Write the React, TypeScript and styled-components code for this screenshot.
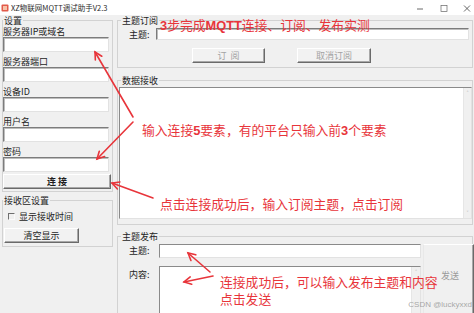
import React from "react";
import styled, { createGlobalStyle } from "styled-components";

const UI = `"Noto Sans CJK SC", "Noto Sans", sans-serif`;
const RED = "#e8353b";

const Global = createGlobalStyle`
  html, body { margin: 0; padding: 0; background: #f0f0f0; }
  body { font-family: ${UI}; }
  * { box-sizing: border-box; }
`;

const Window = styled.div`
  position: relative;
  width: 474px;
  height: 313px;
  overflow: hidden;
  background: #f0f0f0;
  font-family: ${UI};
  font-size: 9px;
  color: #1e1e1e;
  display: flex;
  flex-direction: column;
`;

const TitleBar = styled.div`
  height: 15px;
  flex: none;
  background: #fff;
  display: flex;
  align-items: center;
  padding-left: 1px;
`;

const TitleText = styled.span`
  flex: 1;
  margin-left: 2px;
  font-size: 7.5px;
  line-height: 15px;
  color: #2a2a2a;
  white-space: nowrap;
`;

const Controls = styled.div`
  display: flex;
  gap: 13.5px;
  margin-right: 2px;
  color: #444;
`;

const Body = styled.div`
  flex: 1;
  min-height: 0;
  display: flex;
`;

const LeftCol = styled.div`
  width: 111px;
  margin-left: 2px;
  flex: none;
  display: flex;
  flex-direction: column;
`;

const RightCol = styled.div`
  flex: 1;
  min-width: 0;
  display: flex;
  flex-direction: column;
  padding: 0 1px 0 4px;
`;

const Group = styled.fieldset<{ $mt?: number }>`
  margin: ${(p) => p.$mt ?? 0}px 0 0 0;
  padding: 0;
  min-width: 0;
  border: 1px solid #d2d2d2;
  flex: none;
`;

const Legend = styled.legend<{ $ml?: number }>`
  padding: 0 1px;
  margin-left: ${(p) => p.$ml ?? 0}px;
  font-size: 9px;
  line-height: 11px;
  white-space: nowrap;
`;

const Content = styled.div<{ $p: string }>`
  padding: ${(p) => p.$p};
  display: flex;
  flex-direction: column;
`;

const FieldLabel = styled.div`
  height: 11px;
  line-height: 11px;
  white-space: nowrap;
`;

const Field = styled.div`
  display: flex;
  flex-direction: column;
  & + & {
    margin-top: 4px;
  }
`;

const TextInput = styled.input<{ $w: number; $h: number }>`
  width: ${(p) => p.$w}px;
  height: ${(p) => p.$h}px;
  margin: 0;
  padding: 0 2px;
  background: #fff;
  border: 1px solid;
  border-color: #7c7c7c #e2e2e2 #e2e2e2 #7c7c7c;
  box-shadow: inset 1px 1px 0 #bdbdbd;
  outline: none;
  font: inherit;
`;

const Button = styled.button<{ $w: number; $h: number; $bold?: boolean; $disabled?: boolean; $mt?: number; $ml?: number }>`
  width: ${(p) => p.$w}px;
  height: ${(p) => p.$h}px;
  margin: ${(p) => p.$mt ?? 0}px 0 0 ${(p) => p.$ml ?? 0}px;
  padding: 0;
  background: #f2f2f2;
  border: 1px solid;
  border-color: #ffffff #6a6a6a #6a6a6a #ffffff;
  box-shadow: inset -1px -1px 0 #a8a8a8;
  font-family: ${UI};
  font-size: 9px;
  line-height: 11px;
  font-weight: ${(p) => (p.$bold ? 700 : 400)};
  color: ${(p) => (p.$disabled ? "#a3a3a3" : "#1e1e1e")};
  white-space: pre;
  flex: none;
`;

const CheckRow = styled.div`
  margin-top: 5px;
  height: 11px;
  display: flex;
  align-items: center;
  padding-left: 5px;
  gap: 4px;
  white-space: nowrap;
`;

const CheckBox = styled.span`
  width: 7px;
  height: 7px;
  border-top: 1px solid #6e6e6e;
  border-left: 1px solid #6e6e6e;
  border-right: 1px solid #fafafa;
  border-bottom: 1px solid #fafafa;
`;

const SubRow = styled.div`
  display: flex;
  align-items: center;
  margin-top: 2px;
  height: 12px;
`;

const InlineLabel = styled.span<{ $w: number }>`
  width: ${(p) => p.$w}px;
  flex: none;
  white-space: nowrap;
  line-height: 11px;
`;

const ButtonRow = styled.div`
  display: flex;
  gap: 32px;
  margin-top: 8px;
  padding-left: 63px;
`;

const TextArea = styled.div<{ $h: number }>`
  height: ${(p) => p.$h}px;
  background: #fff;
  border: 1px solid;
  border-color: #8a8a8a #e2e2e2 #e2e2e2 #8a8a8a;
  display: flex;
  justify-content: flex-end;
`;

const ScrollBar = styled.div<{ $w: number }>`
  width: ${(p) => p.$w}px;
  background: #f0f0f0;
  border-left: 1px solid #e6e6e6;
  display: flex;
  flex-direction: column;
  justify-content: space-between;
  align-items: center;
  padding: 2px 0;
  color: #a0a0a0;
  font-size: 6px;
  line-height: 6px;
`;

const PubGrid = styled.div`
  margin-top: 2px;
  padding-left: 11px;
  display: grid;
  grid-template-columns: 28px 262px 51px;
  grid-template-rows: 14px 60px;
  column-gap: 2px;
  row-gap: 8px;
`;

const PubLabel = styled.div<{ $pt: number }>`
  padding-top: ${(p) => p.$pt}px;
  line-height: 11px;
  white-space: nowrap;
`;

const SendButton = styled.div`
  grid-row: 1 / span 2;
  grid-column: 3;
  background: #f0f0f0;
  border: 1px solid;
  border-color: #ffffff #6a6a6a #6a6a6a #e8e8e8;
  box-shadow: inset -1px 0 0 #a8a8a8;
  display: flex;
  justify-content: center;
  padding: 25px 0 0 3px;
  color: #9a9a9a;
  font-size: 9px;
  line-height: 11px;
`;

const PubInput = styled.div`
  background: #fff;
  border: 1px solid;
  border-color: #8a8a8a #e2e2e2 #e2e2e2 #8a8a8a;
`;

const PubText = styled.div`
  background: #fff;
  border: 1px solid;
  border-color: #8a8a8a #e2e2e2 #e2e2e2 #8a8a8a;
  display: flex;
  justify-content: flex-end;
`;

/* ---------- overlay annotations ---------- */

const Overlay = styled.div`
  position: absolute;
  inset: 0;
  pointer-events: none;
`;

const Note = styled.div<{ $x: number; $y: number }>`
  position: absolute;
  left: ${(p) => p.$x}px;
  top: ${(p) => p.$y}px;
  color: ${RED};
  font-family: ${UI};
  font-size: 12.8px;
  line-height: 17px;
  white-space: nowrap;
`;

const Lat = styled.span`
  font-family: "Liberation Sans", Arial, sans-serif;
  font-weight: 700;
`;

const Watermark = styled.div`
  position: absolute;
  right: 2px;
  bottom: 4px;
  font-family: "Liberation Sans", Arial, sans-serif;
  font-size: 8px;
  line-height: 9px;
  color: rgba(140, 140, 140, 0.75);
  white-space: nowrap;
`;

const ArrowLayer = styled.svg`
  position: absolute;
  inset: 0;
`;

type Arr = { x1: number; y1: number; x2: number; y2: number };
const arrows: Arr[] = [
  { x1: 133, y1: 117, x2: 95, y2: 52 },
  { x1: 133, y1: 122, x2: 97, y2: 159 },
  { x1: 153, y1: 198, x2: 112, y2: 183 },
  { x1: 210, y1: 272, x2: 188, y2: 253 },
  { x1: 213, y1: 276, x2: 184, y2: 282 },
];

function Arrow({ x1, y1, x2, y2 }: Arr) {
  const dx = x2 - x1;
  const dy = y2 - y1;
  const len = Math.hypot(dx, dy);
  const ux = -dx / len;
  const uy = -dy / len;
  const s = 8;
  const a = Math.PI / 6.5;
  const rot = (ang: number) => [
    x2 + s * (ux * Math.cos(ang) - uy * Math.sin(ang)),
    y2 + s * (ux * Math.sin(ang) + uy * Math.cos(ang)),
  ];
  const [ax, ay] = rot(a);
  const [bx, by] = rot(-a);
  return (
    <g stroke={RED} strokeWidth={1.6} strokeLinecap="round" fill="none">
      <line x1={x1} y1={y1} x2={x2} y2={y2} />
      <polyline points={`${ax},${ay} ${x2},${y2} ${bx},${by}`} />
    </g>
  );
}

function AppIcon() {
  return (
    <svg width="8" height="8" viewBox="0 0 8 8">
      <rect x="0.5" y="0.5" width="7" height="7" rx="1" fill="#e25a4a" />
      <rect x="2" y="2" width="4" height="4" fill="#f7c1a8" />
    </svg>
  );
}

function WinControls() {
  return (
    <Controls>
      <svg width="10" height="10" viewBox="0 0 10 10">
        <line x1="2" y1="6" x2="8" y2="6" stroke="#444" strokeWidth="0.8" />
      </svg>
      <svg width="10" height="10" viewBox="0 0 10 10">
        <rect x="2" y="2.5" width="6" height="6" fill="none" stroke="#666" strokeWidth="0.7" />
      </svg>
      <svg width="10" height="10" viewBox="0 0 10 10">
        <path d="M2 2.5 L8 8.5 M8 2.5 L2 8.5" stroke="#444" strokeWidth="0.8" />
      </svg>
    </Controls>
  );
}

const leftFields = ["服务器IP或域名", "服务器端口", "设备ID", "用户名", "密码"];

export default function App() {
  return (
    <Window>
      <Global />
      <TitleBar>
        <AppIcon />
        <TitleText>XZ物联网MQTT调试助手V2.3</TitleText>
        <WinControls />
      </TitleBar>
      <Body>
        <LeftCol>
          <Group>
            <Legend>设置</Legend>
            <Content $p="0 0 2px 0">
              {leftFields.map((f) => (
                <Field key={f}>
                  <FieldLabel>{f}</FieldLabel>
                  <TextInput $w={106} $h={15} readOnly />
                </Field>
              ))}
              <Button $w={108} $h={15} $bold $mt={2}>
                连 接
              </Button>
            </Content>
          </Group>
          <Group $mt={3}>
            <Legend>接收区设置</Legend>
            <Content $p="0 0 3px 0">
              <CheckRow>
                <CheckBox />
                <span>显示接收时间</span>
              </CheckRow>
              <Button $w={75} $h={15} $mt={6} $ml={1}>
                清空显示
              </Button>
            </Content>
          </Group>
        </LeftCol>
        <RightCol>
          <Group>
            <Legend $ml={3}>主题订阅</Legend>
            <Content $p="0 0 4px 11px">
              <SubRow>
                <InlineLabel $w={27}>主题:</InlineLabel>
                <TextInput $w={313} $h={12} readOnly />
              </SubRow>
              <ButtonRow>
                <Button $w={73} $h={15} $disabled>
                  订  阅
                </Button>
                <Button $w={74} $h={15} $disabled>
                  取消订阅
                </Button>
              </ButtonRow>
            </Content>
          </Group>
          <Group $mt={7}>
            <Legend $ml={3}>数据接收</Legend>
            <Content $p="1px 0 5px 1px">
              <TextArea $h={132}>
                <ScrollBar $w={8}>
                  <span>˄</span>
                  <span>˅</span>
                </ScrollBar>
              </TextArea>
            </Content>
          </Group>
          <Group $mt={6}>
            <Legend $ml={3}>主题发布</Legend>
            <PubGrid>
              <PubLabel $pt={1}>主题:</PubLabel>
              <PubInput />
              <SendButton>发送</SendButton>
              <PubLabel $pt={3}>内容:</PubLabel>
              <PubText>
                <ScrollBar $w={9}>
                  <span>˄</span>
                  <span />
                </ScrollBar>
              </PubText>
            </PubGrid>
          </Group>
        </RightCol>
      </Body>

      <Overlay>
        <ArrowLayer width="474" height="313" viewBox="0 0 474 313">
          {arrows.map((a, i) => (
            <Arrow key={i} {...a} />
          ))}
        </ArrowLayer>
        <Note $x={160} $y={16}>
          <Lat>3</Lat>步完成<Lat>MQTT</Lat>连接、订阅、发布实测
        </Note>
        <Note $x={142} $y={121}>
          输入连接<Lat>5</Lat>要素，有的平台只输入前<Lat>3</Lat>个要素
        </Note>
        <Note $x={160} $y={195}>
          点击连接成功后，输入订阅主题，点击订阅
        </Note>
        <Note $x={220} $y={273}>
          连接成功后，可以输入发布主题和内容
          <br />
          点击发送
        </Note>
        <Watermark>CSDN @luckyxxd</Watermark>
      </Overlay>
    </Window>
  );
}
